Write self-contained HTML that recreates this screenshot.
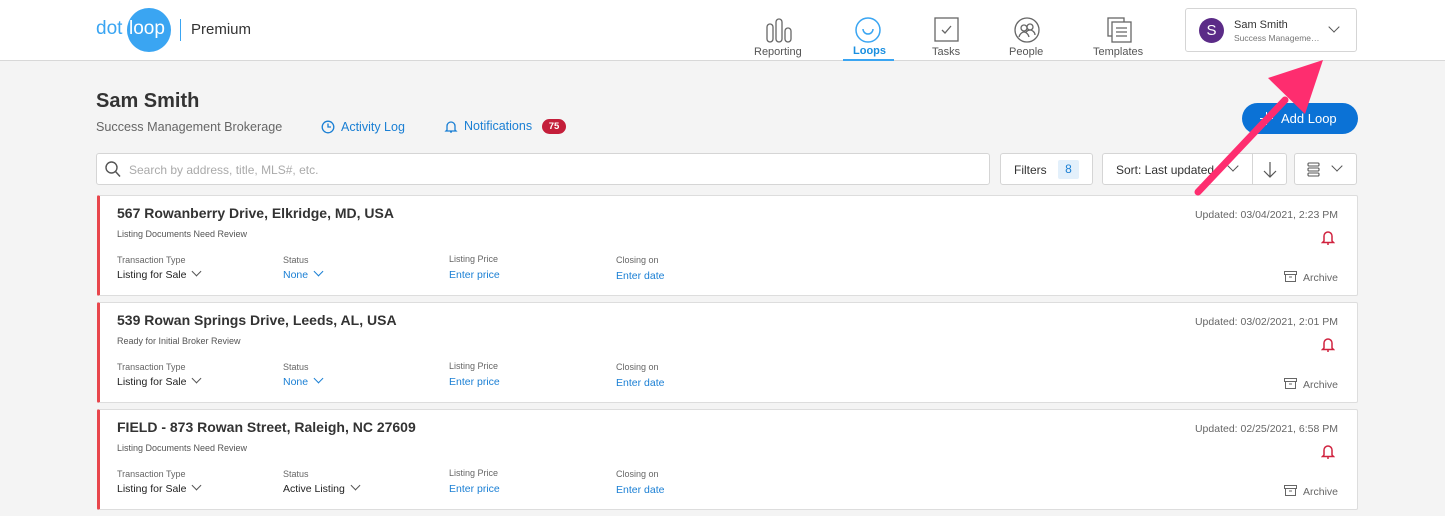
<!DOCTYPE html>
<html><head><meta charset="utf-8"><style>
*{box-sizing:border-box;margin:0;padding:0}
body{width:1445px;height:516px;overflow:hidden;background:#f4f4f4;font-family:"Liberation Sans",sans-serif;color:#333;position:relative}
.abs{position:absolute}
.hdr{position:absolute;left:0;top:0;width:1445px;height:61px;background:#fff;border-bottom:1px solid #d8d8d8}
.nav{position:absolute;top:46px;font-size:11px;color:#555;text-align:center}
.card{position:absolute;left:97px;width:1261px;height:101px;background:#fff;border:1px solid #ddd;border-left:3px solid #e8464c;border-radius:2px}
.card .t{position:absolute;left:17px;top:9px;font-size:14px;font-weight:bold;color:#333}
.card .s{position:absolute;left:17px;top:33px;font-size:9px;color:#555}
.card .l{position:absolute;top:59px;font-size:9px;color:#666}
.card .v{position:absolute;top:73px;font-size:10.5px;color:#222}
.card .b{color:#1a7fd4}
.card .u{position:absolute;right:19px;top:13px;font-size:10.5px;color:#666}
.card .a{position:absolute;right:19px;top:75px;font-size:10.5px;color:#666}
.chev{display:inline-block;width:7px;height:7px;border-right:1px solid #555;border-bottom:1px solid #555;transform:rotate(45deg);margin-left:7px;position:relative;top:-3px}
.ch2{position:absolute;width:8px;height:8px;border-right:1.2px solid #555;border-bottom:1.2px solid #555;transform:rotate(45deg)}
.box{position:absolute;top:153px;height:32px;background:#fff;border:1px solid #d5d5d5;border-radius:3px}
</style></head><body>
<div class="hdr"></div>
<div class="abs" style="left:127px;top:8px;width:44px;height:44px;border-radius:50%;background:#3aa5f2"></div>
<div class="abs" style="left:96px;top:18px;font-size:19px;color:#3aa5f2">dot</div>
<div class="abs" style="left:129px;top:18px;font-size:19px;color:#fff">loop</div>
<div class="abs" style="left:180px;top:19px;width:1px;height:22px;background:#3aa5f2"></div>
<div class="abs" style="left:191px;top:21px;font-size:15px;color:#333">Premium</div>

<svg class="abs" style="left:766px;top:18px" width="26" height="25"><g fill="none" stroke="#666" stroke-width="1.3"><rect x="1" y="6" width="6" height="18" rx="3"/><rect x="10" y="1" width="6" height="23" rx="3"/><rect x="19" y="10" width="6" height="14" rx="3"/></g></svg>
<div class="nav" style="left:754px">Reporting</div>
<svg class="abs" style="left:855px;top:17px" width="26" height="26"><circle cx="13" cy="13" r="12" fill="none" stroke="#3aa5f2" stroke-width="1.5"/><path d="M8 12a5 5 0 0 0 10 0" fill="none" stroke="#3aa5f2" stroke-width="1.5"/></svg>
<div class="nav" style="left:853px;top:45px;color:#1a8fe0;font-weight:bold">Loops</div>
<div class="abs" style="left:843px;top:59px;width:51px;height:2px;background:#3aa5f2"></div>
<svg class="abs" style="left:934px;top:17px" width="26" height="26"><rect x="1" y="1" width="23" height="23" fill="none" stroke="#666" stroke-width="1.3"/><path d="M8 13l3 3 6-7" fill="none" stroke="#666" stroke-width="1.3"/></svg>
<div class="nav" style="left:932px">Tasks</div>
<svg class="abs" style="left:1014px;top:17px" width="26" height="26"><g fill="none" stroke="#666" stroke-width="1.3"><circle cx="13" cy="13" r="12"/><circle cx="10" cy="11" r="3"/><circle cx="16" cy="10" r="3"/><path d="M5 20c1-4 4-5 5-5s4 1 5 5M12 15c1-1 3-2 4-2 2 0 5 2 5 5"/></g></svg>
<div class="nav" style="left:1009px">People</div>
<svg class="abs" style="left:1107px;top:17px" width="26" height="26"><g fill="none" stroke="#666" stroke-width="1.3"><rect x="1" y="1" width="16" height="18"/><rect x="5" y="5" width="19" height="20" fill="#fff"/><path d="M9 11h11M9 15h11M9 19h11"/></g></svg>
<div class="nav" style="left:1093px">Templates</div>

<div class="abs" style="left:1185px;top:8px;width:172px;height:44px;background:#fff;border:1px solid #d5d5d5;border-radius:3px"></div>
<div class="abs" style="left:1199px;top:18px;width:25px;height:25px;border-radius:50%;background:#5b2b87;color:#fff;font-size:15px;text-align:center;line-height:25px">S</div>
<div class="abs" style="left:1234px;top:19px;font-size:11px;color:#333">Sam Smith</div>
<div class="abs" style="left:1234px;top:33px;font-size:8.5px;color:#777">Success Manageme…</div>
<div class="ch2" style="left:1330px;top:23px"></div>

<div class="abs" style="left:96px;top:90px;font-size:20px;font-weight:bold;color:#333">Sam Smith</div>
<div class="abs" style="left:96px;top:120px;font-size:12.6px;color:#666">Success Management Brokerage</div>
<svg class="abs" style="left:321px;top:120px" width="14" height="14"><circle cx="7" cy="7" r="5.8" fill="none" stroke="#1a7fd4" stroke-width="1.3"/><path d="M7 3.5V7h3" fill="none" stroke="#1a7fd4" stroke-width="1.3"/></svg>
<div class="abs" style="left:341px;top:120px;font-size:12.5px;color:#1a7fd4">Activity Log</div>
<svg class="abs" style="left:444px;top:119px" width="14" height="15"><path d="M3 11V7a4 4 0 0 1 8 0v4l1 1H2zM6 13h2" fill="none" stroke="#1a7fd4" stroke-width="1.3"/></svg>
<div class="abs" style="left:464px;top:119px;font-size:12.5px;color:#1a7fd4">Notifications</div>
<div class="abs" style="left:542px;top:119px;width:24px;height:15px;border-radius:8px;background:#c41e3a;color:#fff;font-size:9.5px;font-weight:bold;text-align:center;line-height:15px">75</div>

<div class="abs" style="left:1242px;top:103px;width:116px;height:31px;border-radius:16px;background:#0b72d6;color:#fff;font-size:13px;line-height:31px;padding-left:39px">Add Loop</div>
<div class="abs" style="left:1266px;top:112px;width:1px;height:13px;background:#fff"></div>
<div class="abs" style="left:1260px;top:118px;width:13px;height:1px;background:#fff"></div>

<div class="box" style="left:96px;width:894px"></div>
<svg class="abs" style="left:105px;top:161px" width="16" height="17"><circle cx="6.5" cy="6.5" r="5.5" fill="none" stroke="#555" stroke-width="1.4"/><path d="M10.5 10.5l4.5 5" stroke="#555" stroke-width="1.5"/></svg>
<div class="abs" style="left:129px;top:163px;font-size:12px;color:#aaa">Search by address, title, MLS#, etc.</div>
<div class="box" style="left:1000px;width:93px"></div>
<div class="abs" style="left:1014px;top:163px;font-size:12px;color:#333">Filters</div>
<div class="abs" style="left:1058px;top:160px;width:21px;height:19px;background:#e3f0fb;border-radius:2px;color:#1a7fd4;font-size:12px;text-align:center;line-height:19px">8</div>
<div class="box" style="left:1102px;width:185px"></div>
<div class="abs" style="left:1252px;top:154px;width:1px;height:30px;background:#d5d5d5"></div>
<div class="abs" style="left:1116px;top:163px;font-size:12px;color:#333">Sort: Last updated</div>
<div class="ch2" style="left:1229px;top:162px"></div>
<svg class="abs" style="left:1262px;top:161px" width="16" height="18"><path d="M8 1v15M2 10l6 6 6-6" fill="none" stroke="#555" stroke-width="1.2"/></svg>
<div class="box" style="left:1294px;width:63px"></div>
<svg class="abs" style="left:1307px;top:162px" width="14" height="15"><g fill="none" stroke="#555" stroke-width="1.1"><rect x="1" y="1" width="11" height="3" rx="1"/><rect x="1" y="6" width="11" height="3" rx="1"/><rect x="1" y="11" width="11" height="3" rx="1"/></g></svg>
<div class="ch2" style="left:1333px;top:162px"></div>

<div class="card" style="top:195px"><div class="t">567 Rowanberry Drive, Elkridge, MD, USA</div><div class="s">Listing Documents Need Review</div>
<div class="l" style="left:17px">Transaction Type</div><div class="v" style="left:17px">Listing for Sale<span class="chev"></span></div>
<div class="l" style="left:183px">Status</div><div class="v b" style="left:183px">None<span class="chev" style="border-color:#1a7fd4"></span></div>
<div class="l" style="left:349px;top:58px">Listing Price</div><div class="v b" style="left:349px">Enter price</div>
<div class="l" style="left:516px">Closing on</div><div class="v b" style="left:516px;top:74px">Enter date</div>
<div class="u">Updated: 03/04/2021, 2:23 PM</div>
<svg class="abs" style="right:22px;top:33px" width="14" height="17"><path d="M3 12V7a4 4 0 0 1 8 0v5l1.5 1.5h-11zM7 14v2" fill="none" stroke="#d0223f" stroke-width="1.5"/></svg>
<div class="a"><svg width="13" height="11" style="vertical-align:-1px;margin-right:6px"><rect x="0.5" y="0.5" width="12" height="3" fill="none" stroke="#666"/><rect x="1.5" y="3.5" width="10" height="7" fill="none" stroke="#666"/><path d="M5 6h3" stroke="#666"/></svg>Archive</div></div>

<div class="card" style="top:302px"><div class="t">539 Rowan Springs Drive, Leeds, AL, USA</div><div class="s">Ready for Initial Broker Review</div>
<div class="l" style="left:17px">Transaction Type</div><div class="v" style="left:17px">Listing for Sale<span class="chev"></span></div>
<div class="l" style="left:183px">Status</div><div class="v b" style="left:183px">None<span class="chev" style="border-color:#1a7fd4"></span></div>
<div class="l" style="left:349px;top:58px">Listing Price</div><div class="v b" style="left:349px">Enter price</div>
<div class="l" style="left:516px">Closing on</div><div class="v b" style="left:516px;top:74px">Enter date</div>
<div class="u">Updated: 03/02/2021, 2:01 PM</div>
<svg class="abs" style="right:22px;top:33px" width="14" height="17"><path d="M3 12V7a4 4 0 0 1 8 0v5l1.5 1.5h-11zM7 14v2" fill="none" stroke="#d0223f" stroke-width="1.5"/></svg>
<div class="a"><svg width="13" height="11" style="vertical-align:-1px;margin-right:6px"><rect x="0.5" y="0.5" width="12" height="3" fill="none" stroke="#666"/><rect x="1.5" y="3.5" width="10" height="7" fill="none" stroke="#666"/><path d="M5 6h3" stroke="#666"/></svg>Archive</div></div>

<div class="card" style="top:409px"><div class="t">FIELD - 873 Rowan Street, Raleigh, NC 27609</div><div class="s">Listing Documents Need Review</div>
<div class="l" style="left:17px">Transaction Type</div><div class="v" style="left:17px">Listing for Sale<span class="chev"></span></div>
<div class="l" style="left:183px">Status</div><div class="v" style="left:183px">Active Listing<span class="chev"></span></div>
<div class="l" style="left:349px;top:58px">Listing Price</div><div class="v b" style="left:349px">Enter price</div>
<div class="l" style="left:516px">Closing on</div><div class="v b" style="left:516px;top:74px">Enter date</div>
<div class="u">Updated: 02/25/2021, 6:58 PM</div>
<svg class="abs" style="right:22px;top:33px" width="14" height="17"><path d="M3 12V7a4 4 0 0 1 8 0v5l1.5 1.5h-11zM7 14v2" fill="none" stroke="#d0223f" stroke-width="1.5"/></svg>
<div class="a"><svg width="13" height="11" style="vertical-align:-1px;margin-right:6px"><rect x="0.5" y="0.5" width="12" height="3" fill="none" stroke="#666"/><rect x="1.5" y="3.5" width="10" height="7" fill="none" stroke="#666"/><path d="M5 6h3" stroke="#666"/></svg>Archive</div></div>

<svg class="abs" style="left:0;top:0" width="1445" height="516"><line x1="1198" y1="192" x2="1285" y2="100" stroke="#fe2d6f" stroke-width="7" stroke-linecap="round"/><polygon points="1323,60 1268,78 1305,114" fill="#fe2d6f"/></svg>
</body></html>
